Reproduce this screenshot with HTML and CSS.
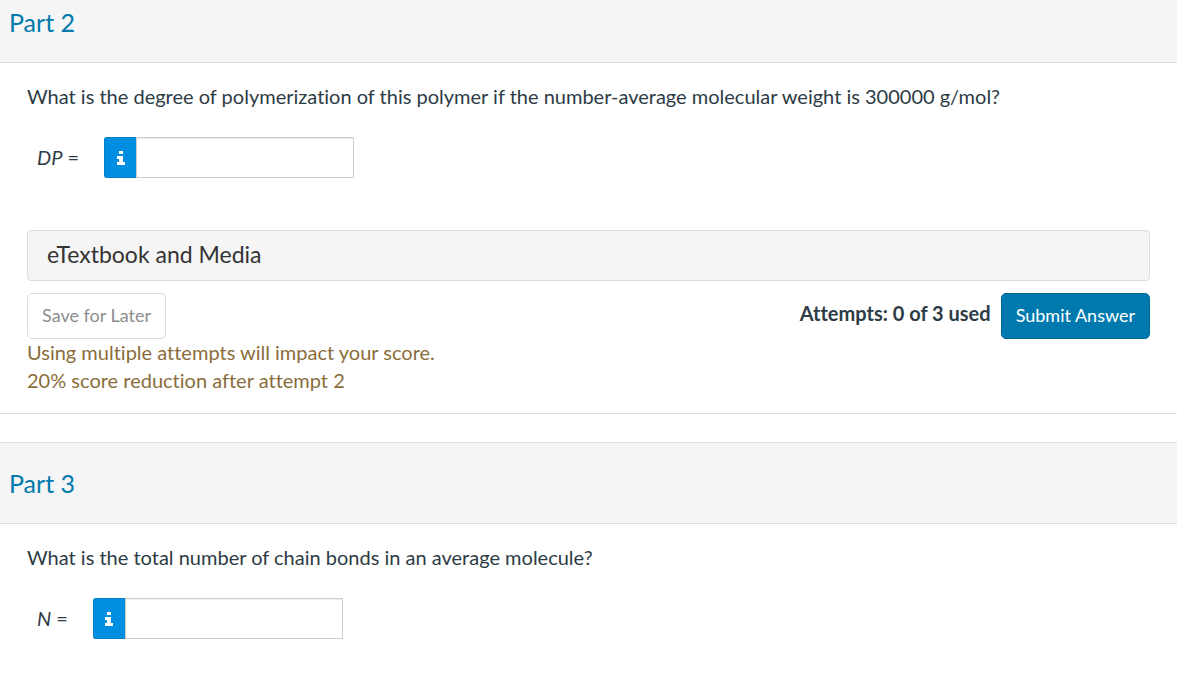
FILE: index.html
```html
<!DOCTYPE html>
<html lang="en">
<head>
    <meta charset="UTF-8">
    <meta name="viewport" content="width=device-width, initial-scale=1.0">
    <title>Question Parts</title>
    <link rel="stylesheet" href="styles.css">
</head>
<body>

    <!-- Part 2 -->
    <section class="part">
        <header class="part-header first">
            <h2>Part 2</h2>
        </header>
        <div class="part-body">
            <p class="question">What is the degree of polymerization of this polymer if the number-average molecular weight is 300000 g/mol?</p>
            <div class="answer">
                <label for="dp-input"><em>DP</em> =</label>
                <div class="input-group">
                    <button type="button" class="info-button" aria-label="Input information">
                        <svg width="8" height="14" viewBox="0 0 8 14" fill="currentColor">
                            <path d="M2 0h4v3H2zM0 5h6v6h2v3H0v-3h2V8H0z"></path>
                        </svg>
                    </button>
                    <input type="text" id="dp-input">
                </div>
            </div>

            <button type="button" class="resource-button">eTextbook and Media</button>

            <div class="actions">
                <button type="button" class="save-button">Save for Later</button>
                <div class="submit">
                    <span class="attempts">Attempts: 0 of 3 used</span>
                    <button type="button" class="submit-button">Submit Answer</button>
                </div>
            </div>
            <div class="policy">
                <p>Using multiple attempts will impact your score.</p>
                <p>20% score reduction after attempt 2</p>
            </div>
        </div>
    </section>

    <!-- Part 3 -->
    <section class="part">
        <header class="part-header">
            <h2>Part 3</h2>
        </header>
        <div class="part-body">
            <p class="question">What is the total number of chain bonds in an average molecule?</p>
            <div class="answer">
                <label for="n-input"><em>N</em> =</label>
                <div class="input-group">
                    <button type="button" class="info-button" aria-label="Input information">
                        <svg width="8" height="14" viewBox="0 0 8 14" fill="currentColor">
                            <path d="M2 0h4v3H2zM0 5h6v6h2v3H0v-3h2V8H0z"></path>
                        </svg>
                    </button>
                    <input type="text" id="n-input">
                </div>
            </div>
        </div>
    </section>

</body>
</html>
```
FILE: styles.css
```css
* {
    margin: 0;
    padding: 0;
    box-sizing: border-box;
}

body {
    background-color: #fff;
    color: #2d3b45;
    font-family: Lato, sans-serif;
    font-size: 20px;
    line-height: 28px;
    font-variant-ligatures: none;
}

button,
input {
    font-family: inherit;
    font-size: inherit;
    font-variant-ligatures: inherit;
}

button {
    cursor: pointer;
}

.part + .part {
    border-top: 1px solid #ddd;
    margin-top: 28px;
}

.part:first-child {
    border-bottom: 1px solid #ddd;
}

.part-header {
    background-color: #f5f5f5;
    border-bottom: 1px solid #ddd;
    padding: 20px 9px;
}

.part-header.first {
    padding-top: 2px;
}

.part-header h2 {
    color: #0079ad;
    font-size: 25px;
    font-weight: normal;
    line-height: 40px;
}

.part-body {
    padding: 19px 27px;
}

.answer {
    display: flex;
    align-items: center;
    gap: 25px;
    margin-top: 27px;
    padding-left: 10px;
}

.answer label {
    padding-bottom: 2px;
}

.input-group {
    display: flex;
    height: 41px;
}

.info-button {
    width: 32px;
    display: flex;
    align-items: center;
    justify-content: center;
    background-color: #008ee2;
    color: #fff;
    border: 1px solid #007fca;
    border-right: none;
    border-radius: 3px 0 0 3px;
}

.input-group input {
    width: 218px;
    padding: 0 12px;
    color: inherit;
    background-color: #fff;
    border: 1px solid #ccc;
    box-shadow: inset 0 1px 1px rgba(0, 0, 0, 0.075);
}

.resource-button {
    display: block;
    width: 100%;
    height: 51px;
    margin-top: 52px;
    padding: 0 19px 3px;
    text-align: left;
    font-size: 23px;
    color: #333;
    background-color: #f5f5f5;
    border: 1px solid #ddd;
    border-radius: 4px;
}

.actions {
    display: flex;
    justify-content: space-between;
    margin-top: 12px;
}

.save-button,
.submit-button {
    height: 46px;
    padding: 0 14px 2px;
    font-size: 18px;
    border-radius: 5px;
}

.save-button {
    color: #8c8c8c;
    background-color: #fff;
    border: 1px solid #ddd;
}

.submit {
    display: flex;
    gap: 10px;
}

.attempts {
    font-weight: bold;
    line-height: 40px;
}

.submit-button {
    color: #fff;
    background-color: #007aae;
    border: 1px solid #006894;
}

.policy {
    margin-top: -1px;
    color: #8a6d3b;
}
```
